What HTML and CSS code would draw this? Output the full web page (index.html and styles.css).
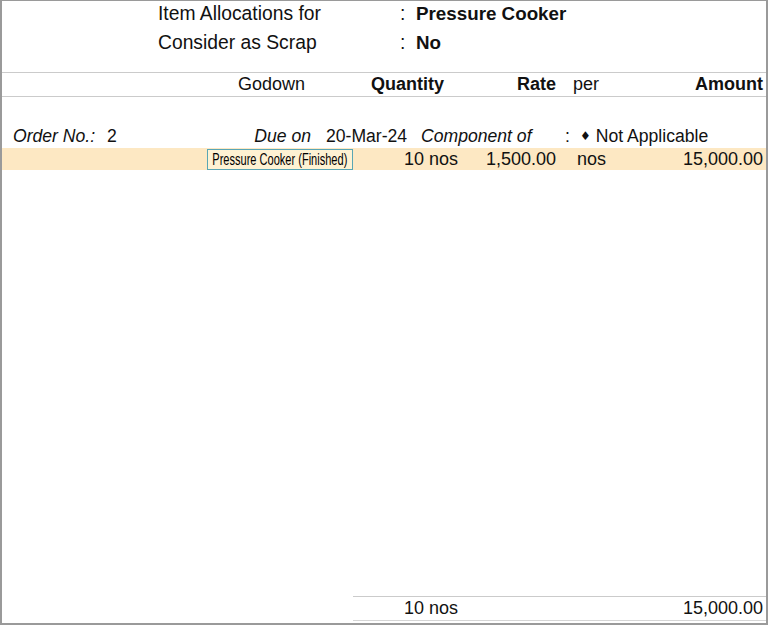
FILE: index.html
```html
<!DOCTYPE html>
<html lang="en">
<head>
	<meta charset="UTF-8">
	<title>Item Allocations</title>
	<link rel="stylesheet" href="styles.css">
</head>
<body>
<div class="alloc_wrap">
	<div class="alloc_head">
		<span class="head_label">Item Allocations for</span>
		<span class="head_colon">:</span>
		<span class="head_value">Pressure Cooker</span>
		<span class="head_label">Consider as Scrap</span>
		<span class="head_colon">:</span>
		<span class="head_value">No</span>
	</div>
	<div class="col_row col_title">
		<span></span>
		<span class="col_godown">Godown</span>
		<span class="col_qty">Quantity</span>
		<span class="col_rate">Rate</span>
		<span class="col_per">per</span>
		<span class="col_amt">Amount</span>
	</div>
	<div class="order_row">
		<span class="order_label">Order No.:</span>
		<span>2</span>
		<span class="order_due">Due on</span>
		<span class="order_date">20-Mar-24</span>
		<span class="order_comp">Component of</span>
		<span>:</span>
		<span><span class="diamond">&#9830;</span>Not Applicable</span>
	</div>
	<div class="col_row item_row">
		<span></span>
		<span class="godown_box"><span class="godown_text">Pressure Cooker (Finished)</span></span>
		<span class="col_qty">10 nos</span>
		<span class="col_rate">1,500.00</span>
		<span class="col_per">nos</span>
		<span class="col_amt">15,000.00</span>
	</div>
	<div class="alloc_space"></div>
	<div class="total_row">
		<span class="col_qty">10 nos</span>
		<span></span>
		<span></span>
		<span class="col_amt">15,000.00</span>
	</div>
</div>
</body>
</html>
```

FILE: styles.css
```css
body,div,span{margin:0;padding:0}
body{background:#fff;font-family:'Liberation Sans',Arial,sans-serif;color:#111}
.alloc_wrap{box-sizing:border-box;width:768px;height:625px;display:flex;flex-direction:column;border:2px solid #9a9a9a;border-top-width:1px;font-size:18px}

.alloc_head{display:grid;grid-template-columns:156px 242px 16px 1fr;grid-auto-rows:25px;row-gap:4px;line-height:25px;font-size:19.3px;padding-bottom:17px;border-bottom:1px solid #cbcbcb}
.alloc_head .head_label{grid-column:2}
.alloc_head .head_value{font-weight:bold;font-size:18.8px}

.col_row{display:grid;grid-template-columns:205px 146px 105px 98px 84px 1fr}
.col_title{height:23px;line-height:23px;border-bottom:1px solid #cbcbcb}
.col_title .col_godown{padding-left:31px}
.col_title .col_qty,.col_title .col_rate,.col_title .col_amt{font-weight:bold}
.col_title .col_qty{padding-right:14px}
.col_title .col_per{padding-left:17px}
.col_qty,.col_rate,.col_amt{text-align:right}
.col_amt{padding-right:3px}

.order_row{display:grid;grid-template-columns:105px 60px 144px 110px 144px 15px 1fr;line-height:22px;padding:28px 0 1px;font-size:17.6px}
.order_row .order_label{padding-left:11px;font-style:italic}
.order_row .order_due{text-align:right;font-style:italic}
.order_row .order_date{padding-left:15px}
.order_row .order_comp{font-style:italic}
.order_row .diamond{font-size:12px;vertical-align:2px;margin-right:5px;font-family:'DejaVu Sans',sans-serif}

.item_row{height:22px;line-height:22px;background:#fde8c3}
.item_row .col_per{padding-left:21px}
.godown_box{box-sizing:border-box;display:flex;justify-content:center;height:21px;margin-top:1px;line-height:19px;border:1px solid #5aa6b4;background:#fef2d3;white-space:nowrap}
.godown_text{flex-shrink:0;font-size:16px;color:#000;transform:scaleX(0.69)}

.alloc_space{flex:1}
.total_row{display:grid;grid-template-columns:105px 98px 84px 1fr;margin:0 0 2px 351px;line-height:23px;border-top:1px solid #cbcbcb;border-bottom:1px solid #d6d6d6}
```
